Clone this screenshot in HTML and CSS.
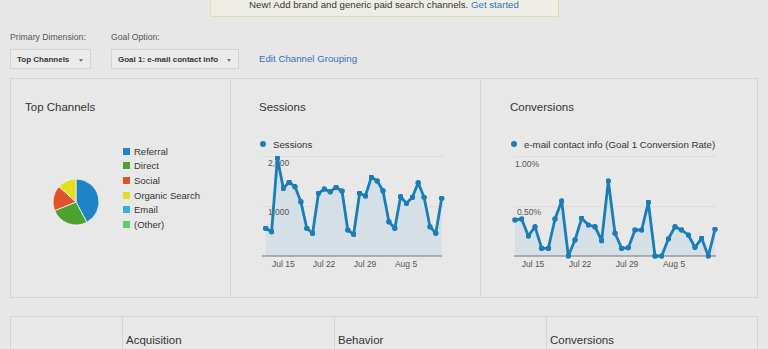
FILE: index.html
```html
<!DOCTYPE html>
<html>
<head>
<meta charset="utf-8">
<link rel="stylesheet" href="styles.css">
</head>
<body>
<div class="banner">New! Add brand and generic paid search channels. <a class="link">Get started</a></div>

<div class="controls">
  <div class="ctl ctl-dim">
    <div class="ctl-label">Primary Dimension:</div>
    <div class="select sel-dim"><span>Top Channels</span><i class="caret"></i></div>
  </div>
  <div class="ctl ctl-goal">
    <div class="ctl-label">Goal Option:</div>
    <div class="select sel-goal"><span>Goal 1: e-mail contact info</span><i class="caret"></i></div>
  </div>
  <a class="link edit-link">Edit Channel Grouping</a>
</div>

<div class="panel overview">
  <div class="card card-channels">
    <div class="card-title">Top Channels</div>
    <div class="pie-row">
      <svg class="pie" width="60" height="60" viewBox="0 0 60 60">
        <path d="M30,30 L30,7 A23,23 0 0 1 40.8,50.31 Z" fill="#1f84c6"/>
        <path d="M30,30 L40.8,50.31 A23,23 0 0 1 8.67,38.62 Z" fill="#4ca22f"/>
        <path d="M30,30 L8.67,38.62 A23,23 0 0 1 12.91,14.61 Z" fill="#e0522b"/>
        <path d="M30,30 L12.91,14.61 A23,23 0 0 1 30,7 Z" fill="#e3df1e"/>
      </svg>
      <ul class="legend">
        <li><i class="sw sw-ref"></i>Referral</li>
        <li><i class="sw sw-dir"></i>Direct</li>
        <li><i class="sw sw-soc"></i>Social</li>
        <li><i class="sw sw-org"></i>Organic Search</li>
        <li><i class="sw sw-ema"></i>Email</li>
        <li><i class="sw sw-oth"></i>(Other)</li>
      </ul>
    </div>
  </div>

  <div class="card card-sessions">
    <div class="card-title">Sessions</div>
    <div class="series"><i class="dot"></i>Sessions</div>
    <svg class="chart" width="192" height="122" viewBox="0 0 192 122">
      <defs>
        <marker id="m1" viewBox="0 0 6 6" refX="3" refY="3" markerUnits="userSpaceOnUse" markerWidth="5.6" markerHeight="5.6">
          <circle cx="3" cy="3" r="3" fill="#1a7db8"/>
        </marker>
      </defs>
      <line x1="3" y1="6.7" x2="185" y2="6.7" class="grid"/>
      <line x1="3" y1="56.7" x2="185" y2="56.7" class="grid"/>
      <polygon class="area" points="6.7,106 6.7,78.3 12.6,81.7 18.4,8.3 24.3,38.3 30.2,32.3 36,36.7 41.9,51.7 47.8,78.3 53.6,83.3 59.5,43.3 65.4,39 71.2,41.7 77.1,37.3 83,41 88.8,80 94.7,84.3 100.6,43.3 106.4,46 112.3,27.3 118.2,31 124,40.7 129.9,71.7 135.8,78.3 141.6,46.7 147.5,53.3 153.4,47.3 159.2,32.7 165.1,47.3 171,76.7 176.8,83.3 182.7,48.3 182.7,106"/>
      <line x1="3" y1="106" x2="183" y2="106" class="axis"/>
      <text x="9" y="16" class="ylab">2,000</text>
      <text x="9" y="65" class="ylab">1,000</text>
      <polyline class="line" marker-start="url(#m1)" marker-mid="url(#m1)" marker-end="url(#m1)" points="6.7,78.3 12.6,81.7 18.4,8.3 24.3,38.3 30.2,32.3 36,36.7 41.9,51.7 47.8,78.3 53.6,83.3 59.5,43.3 65.4,39 71.2,41.7 77.1,37.3 83,41 88.8,80 94.7,84.3 100.6,43.3 106.4,46 112.3,27.3 118.2,31 124,40.7 129.9,71.7 135.8,78.3 141.6,46.7 147.5,53.3 153.4,47.3 159.2,32.7 165.1,47.3 171,76.7 176.8,83.3 182.7,48.3"/>
      <text x="24.3" y="116.5" class="xlab">Jul 15</text>
      <text x="65" y="116.5" class="xlab">Jul 22</text>
      <text x="106" y="116.5" class="xlab">Jul 29</text>
      <text x="147" y="116.5" class="xlab">Aug 5</text>
    </svg>
  </div>

  <div class="card card-conv">
    <div class="card-title">Conversions</div>
    <div class="series"><i class="dot"></i>e-mail contact info (Goal 1 Conversion Rate)</div>
    <svg class="chart" width="212" height="122" viewBox="0 0 212 122">
      <defs>
        <marker id="m2" viewBox="0 0 6 6" refX="3" refY="3" markerUnits="userSpaceOnUse" markerWidth="5.6" markerHeight="5.6">
          <circle cx="3" cy="3" r="3" fill="#1a7db8"/>
        </marker>
      </defs>
      <line x1="4" y1="6.7" x2="206" y2="6.7" class="grid"/>
      <line x1="4" y1="56.7" x2="206" y2="56.7" class="grid"/>
      <polygon class="area" points="5,106 5,70 11.67,69 18.33,86 25,76.7 31.67,98.3 38.33,98.3 45,69 51.67,51 58.33,106 65,90 71.67,68.3 78.33,75 85,76.7 91.67,90.7 98.33,31 105,83.3 111.67,98.3 118.33,97.7 125,80 131.67,80 138.33,52.3 145,106 151.67,106 158.33,89 165,76.7 171.67,80 178.33,85 185,97.3 191.67,88.3 198.33,106 205,79.3 205,106"/>
      <line x1="4" y1="106" x2="206" y2="106" class="axis"/>
      <text x="5" y="17" class="ylab">1.00%</text>
      <text x="7" y="65" class="ylab">0.50%</text>
      <polyline class="line" marker-start="url(#m2)" marker-mid="url(#m2)" marker-end="url(#m2)" points="5,70 11.67,69 18.33,86 25,76.7 31.67,98.3 38.33,98.3 45,69 51.67,51 58.33,106 65,90 71.67,68.3 78.33,75 85,76.7 91.67,90.7 98.33,31 105,83.3 111.67,98.3 118.33,97.7 125,80 131.67,80 138.33,52.3 145,106 151.67,106 158.33,89 165,76.7 171.67,80 178.33,85 185,97.3 191.67,88.3 198.33,106 205,79.3"/>
      <text x="23" y="116.5" class="xlab">Jul 15</text>
      <text x="70" y="116.5" class="xlab">Jul 22</text>
      <text x="117" y="116.5" class="xlab">Jul 29</text>
      <text x="164" y="116.5" class="xlab">Aug 5</text>
    </svg>
  </div>
</div>

<div class="panel table-head">
  <div class="th th-first"></div>
  <div class="th">Acquisition</div>
  <div class="th">Behavior</div>
  <div class="th">Conversions</div>
</div>
</body>
</html>
```
FILE: styles.css
```css
* { box-sizing: border-box; }
html, body { margin: 0; padding: 0; }
body {
  background: #e7e7e7;
  font-family: "Liberation Sans", Arial, sans-serif;
  color: #333;
  width: 768px;
  height: 349px;
  overflow: hidden;
}
.link { color: #3573b5; text-decoration: none; cursor: pointer; }

.banner {
  width: 349px;
  margin: 0 auto;
  border: 1px solid #e2dcae;
  border-top: 0;
  background: #efeee6;
  font-size: 9.7px;
  line-height: 10px;
  height: 17px;
  text-align: center;
  color: #333;
}

.controls {
  display: flex;
  align-items: flex-end;
  padding-left: 10px;
  margin-top: 15px;
}
.ctl { display: flex; flex-direction: column; gap: 7px; }
.ctl-dim { width: 101px; }
.ctl-goal { width: 148px; }
.ctl-label {
  font-size: 8.7px;
  line-height: 10px;
  color: #555;
}
.select {
  height: 20px;
  border: 1px solid #d3d3d3;
  background: #ebebeb;
  display: flex;
  align-items: center;
  justify-content: space-between;
  padding: 0 7px 0 6px;
  font-size: 8px;
  font-weight: bold;
  color: #333;
}
.sel-dim { width: 81px; }
.sel-goal { width: 128px; }
.caret {
  width: 0; height: 0;
  border-left: 2.5px solid transparent;
  border-right: 2.5px solid transparent;
  border-top: 3px solid #777;
  margin-top: 2px;
}
.edit-link {
  font-size: 9.7px;
  line-height: 20px;
  height: 20px;
}

.panel {
  margin: 0 10px;
  border: 1px solid #d6d6d6;
  background: #e8e8e8;
}
.overview {
  margin-top: 9px;
  height: 220px;
  display: grid;
  grid-template-columns: 220px 250px 1fr;
}
.card { border-right: 1px solid #d6d6d6; padding-top: 21px; }
.card:last-child { border-right: 0; }
.card-channels { padding-left: 14px; }
.card-sessions { padding-left: 28px; }
.card-conv { padding-left: 29px; }
.card-title {
  font-size: 11.5px;
  line-height: 14px;
  color: #333;
}

.pie-row { display: flex; align-items: flex-start; margin-top: 30px; }
.pie { margin-left: 21px; margin-top: 28px; flex: none; }
.pie path { stroke: #f2f2f2; stroke-width: 0.8; }
.legend { list-style: none; margin: 0 0 0 17px; padding: 0; }
.legend li {
  display: flex;
  align-items: center;
  height: 14.67px;
  font-size: 9.5px;
  color: #333;
}
.sw { width: 7px; height: 7px; margin-right: 4px; flex: none; }
.sw-ref { background: #1f84c6; }
.sw-dir { background: #4ca22f; }
.sw-soc { background: #e0522b; }
.sw-org { background: #e3df1e; }
.sw-ema { background: #2ab4d8; }
.sw-oth { background: #5acf6a; }

.series {
  margin-top: 24px;
  display: flex;
  align-items: center;
  height: 12px;
  font-size: 9.7px;
  color: #333;
}
.dot {
  width: 6px; height: 6px;
  border-radius: 50%;
  background: #1a7db8;
  margin: 0 7px 0 1px;
  flex: none;
}
.chart { display: block; }
.grid { stroke: #dcdcdc; stroke-width: 1; }
.axis { stroke: #9a9a9a; stroke-width: 1.6; }
.area { fill: #d4dfe6; }
.line { fill: none; stroke: #1a7db8; stroke-width: 2.8; stroke-linejoin: round; }
.ylab { font-size: 8.5px; fill: #555; font-family: "Liberation Sans", Arial, sans-serif; }
.xlab { font-size: 8.5px; fill: #555; text-anchor: middle; font-family: "Liberation Sans", Arial, sans-serif; }

.table-head {
  margin-top: 18px;
  height: 33px;
  border-bottom: 0;
  display: grid;
  grid-template-columns: 112px 212px 212px 1fr;
}
.th {
  border-right: 1px solid #d6d6d6;
  padding: 16px 0 0 3px;
  font-size: 11.5px;
  line-height: 14px;
  color: #333;
}
.th:last-child { border-right: 0; }
```
